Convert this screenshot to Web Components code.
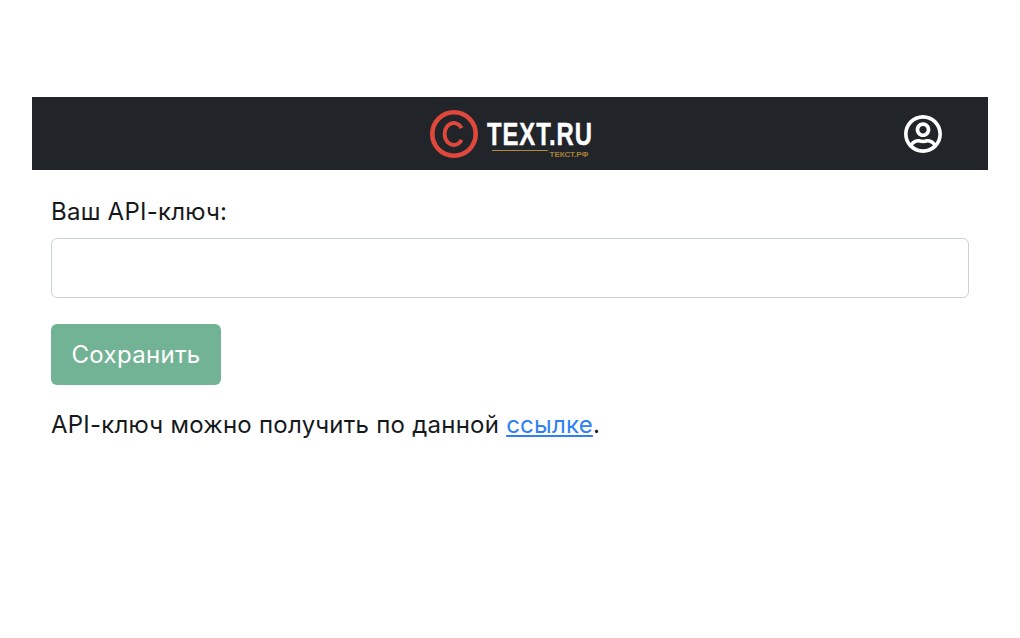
<!DOCTYPE html>
<html lang="ru">
<head>
<meta charset="utf-8">
<title>TEXT.RU</title>
<style>
  html, body { margin: 0; background: #fff; }
  body { padding: 97px 32px 0; font-family: Inter, "Liberation Sans", sans-serif; color: #212529; }
</style>
</head>
<body>
<app-header></app-header>
<api-key-form>
  API-ключ можно получить по данной <a href="#" style="color:#2f80f6">ссылке</a>.
</api-key-form>

<script>
class TextLogo extends HTMLElement {
  constructor() {
    super();
    this.attachShadow({ mode: "open" }).innerHTML = `
      <style>
        :host { display: flex; align-items: flex-start; gap: 9px; height: 48px; }
        svg { display: block; }
        .words { display: flex; flex-direction: column; width: 104px; padding-top: 10px; }
        .name {
          font: 700 31px/30px "Liberation Sans", sans-serif;
          -webkit-text-stroke: .4px #fff;
          letter-spacing: 1.2px;
          color: #fff;
          transform: scaleX(.77);
          transform-origin: left center;
          white-space: nowrap;
          height: 30px;
        }
        .sub { display: flex; align-items: flex-start; height: 10px; padding-left: 5px; }
        .line { width: 56px; height: 1px; background: #b58a3c; }
        .small { font: 700 8px/10px "Liberation Sans", sans-serif; color: #a8803a; margin: 0 0 0 2px; white-space: nowrap; }
      </style>
      <svg width="48" height="48" viewBox="0 0 48 48" fill="none" stroke="#e0483c">
        <circle cx="24" cy="24" r="21.7" stroke-width="4.6"/>
        <path d="M31.6 18.1A9.2 11 0 1 0 31.6 29.9" stroke-width="3.8"/>
      </svg>
      <div class="words">
        <div class="name">TEXT.RU</div>
        <div class="sub"><span class="line"></span><span class="small">ТЕКСТ.РФ</span></div>
      </div>`;
  }
}

class AppHeader extends HTMLElement {
  constructor() {
    super();
    this.attachShadow({ mode: "open" }).innerHTML = `
      <style>
        :host {
          display: grid;
          grid-template-columns: 1fr auto 1fr;
          align-items: center;
          height: 73px;
          background: #212529;
        }
        text-logo { grid-column: 2; margin-top: 1px; }
        .user { grid-column: 3; justify-self: end; margin-right: 46px; display: block; }
      </style>
      <text-logo></text-logo>
      <svg class="user" width="38" height="38" viewBox="0 8 496 496" fill="#fff">
        <path d="M248 104c-53 0-96 43-96 96s43 96 96 96 96-43 96-96-43-96-96-96zm0 144c-26.5 0-48-21.5-48-48s21.5-48 48-48 48 21.5 48 48-21.5 48-48 48zm0-240C111 8 0 119 0 256s111 248 248 248 248-111 248-248S385 8 248 8zm0 448c-49.7 0-95.1-18.3-130.1-48.4 14.9-23 40.4-38.6 69.6-39.5 20.8 6.4 40.6 9.6 60.5 9.6s39.7-3.1 60.5-9.6c29.2 1 54.7 16.5 69.6 39.5-35 30.1-80.4 48.4-130.1 48.4zm162.7-84.1c-24.4-31.4-62.1-51.9-105.1-51.9-10.2 0-26 9.6-57.6 9.6-31.5 0-47.4-9.6-57.6-9.6-42.9 0-80.6 20.5-105.1 51.9C61.9 339.2 48 299.2 48 256c0-110.3 89.7-200 200-200s200 89.7 200 200c0 43.2-13.9 83.2-37.3 115.9z"/>
      </svg>`;
  }
}

class ApiKeyForm extends HTMLElement {
  constructor() {
    super();
    this.attachShadow({ mode: "open" }).innerHTML = `
      <style>
        :host {
          display: block;
          padding: 26px 19px 0;
          font-size: 24px;
          line-height: 32px;
          letter-spacing: .24px;
          color: #16191c;
        }
        label { display: block; margin-bottom: 10px; }
        input {
          display: block;
          box-sizing: border-box;
          width: 100%;
          height: 60px;
          border: 1.5px solid #cbd3da;
          border-radius: 6px;
          background: #fff;
          margin-bottom: 26px;
        }
        button {
          display: block;
          width: 170px;
          height: 61px;
          border: 0;
          border-radius: 6px;
          background: #73b395;
          color: #fff;
          font: inherit;
          letter-spacing: .3px;
          padding: 0;
          margin-bottom: 24px;
        }
        p { margin: 0; }
      </style>
      <label for="key">Ваш API-ключ:</label>
      <input id="key" type="text">
      <button type="button">Сохранить</button>
      <p><slot></slot></p>`;
  }
}

customElements.define("text-logo", TextLogo);
customElements.define("app-header", AppHeader);
customElements.define("api-key-form", ApiKeyForm);
</script>
</body>
</html>
